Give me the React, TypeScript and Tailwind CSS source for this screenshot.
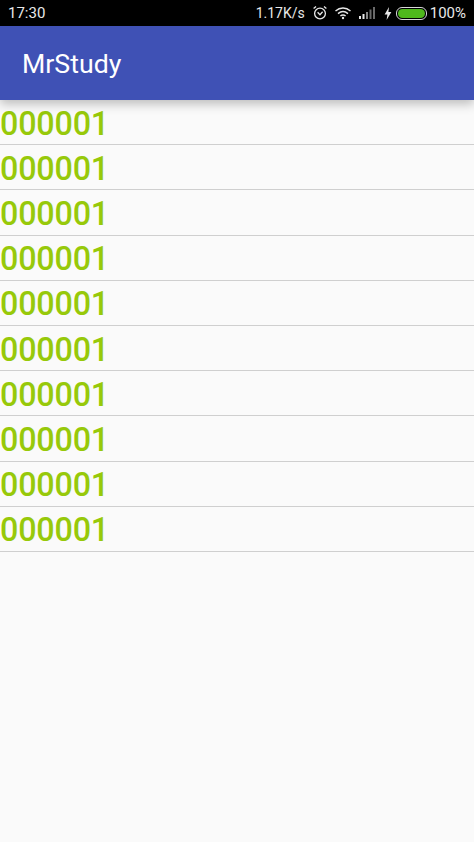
import { useState } from 'react';

const rows = Array.from({ length: 10 }, () => '000001');

function StatusIcons() {
  return (
    <div className="flex items-center">
      <svg width="16" height="16" viewBox="0 0 16 16" fill="none" stroke="#e8e8e8" strokeWidth="1.3" className="ml-[7px]">
        <circle cx="8" cy="8.5" r="5.4" />
        <path d="M5.6 7.2 8 9.8l2.6-3" />
        <path d="M1.6 3.6 4 1.6M14.4 3.6 12 1.6" />
      </svg>
      <svg width="18" height="14" viewBox="0 0 18 14" fill="none" stroke="#e8e8e8" className="ml-[6px]">
        <path d="M1.5 5C6 1 12 1 16.5 5" strokeWidth="1.4" />
        <path d="M4 7.6c3-2.6 7-2.6 10 0" strokeWidth="1.4" />
        <path d="M6.4 10c1.6-1.3 3.6-1.3 5.2 0" strokeWidth="1.4" />
        <circle cx="9" cy="12" r="1.2" fill="#e8e8e8" stroke="none" />
      </svg>
      <svg width="17" height="14" viewBox="0 0 17 14" className="ml-[7px]">
        <rect x="0" y="10" width="2" height="3" fill="#e8e8e8" />
        <rect x="3.5" y="8" width="2" height="5" fill="#e8e8e8" />
        <rect x="7" y="6" width="2" height="7" fill="#8a8a8a" />
        <rect x="10.5" y="3.5" width="2" height="9.5" fill="#6a6a6a" />
        <rect x="14" y="1" width="2" height="12" fill="#6a6a6a" />
      </svg>
      <svg width="8" height="13" viewBox="0 0 8 13" className="ml-[8px]">
        <path d="M5 0 0.6 7.4H3.4L2.6 13 7.4 5H4.4Z" fill="#e8e8e8" />
      </svg>
      <div className="ml-[4px] flex h-[13px] w-[31px] items-center rounded-[6px] border border-[#d8d8d8] p-px">
        <div className="h-full w-full rounded-[5px] bg-[#4fb81c]" />
      </div>
    </div>
  );
}

export default function App() {
  const [items] = useState(rows);

  return (
    <div className="flex h-[842px] flex-col bg-[#fafafa] font-['Roboto',sans-serif]">
      <div className="flex h-[26px] items-center justify-between bg-black px-2 text-[14px] text-[#e8e8e8]">
        <span className="text-[15px]">17:30</span>
        <div className="flex items-center">
          <span>1.17K/s</span>
          <StatusIcons />
          <span className="ml-[3px] text-[15px]">100%</span>
        </div>
      </div>

      <header className="z-10 flex h-[74px] items-center bg-[#3f51b5] pt-[3px] pl-[22px] shadow-[0_4px_10px_rgba(0,0,0,0.25)]">
        <h1 className="text-[26.7px] font-normal text-white">MrStudy</h1>
      </header>

      <ul>
        {items.map((item, i) => (
          <li key={i} className="flex h-[45.2px] items-center border-b border-[#cfcfcf] pt-px">
            <span className="origin-left scale-x-[0.95] text-[34px] leading-none font-medium tracking-[-0.2px] text-[#97c90a]">{item}</span>
          </li>
        ))}
      </ul>
    </div>
  );
}
